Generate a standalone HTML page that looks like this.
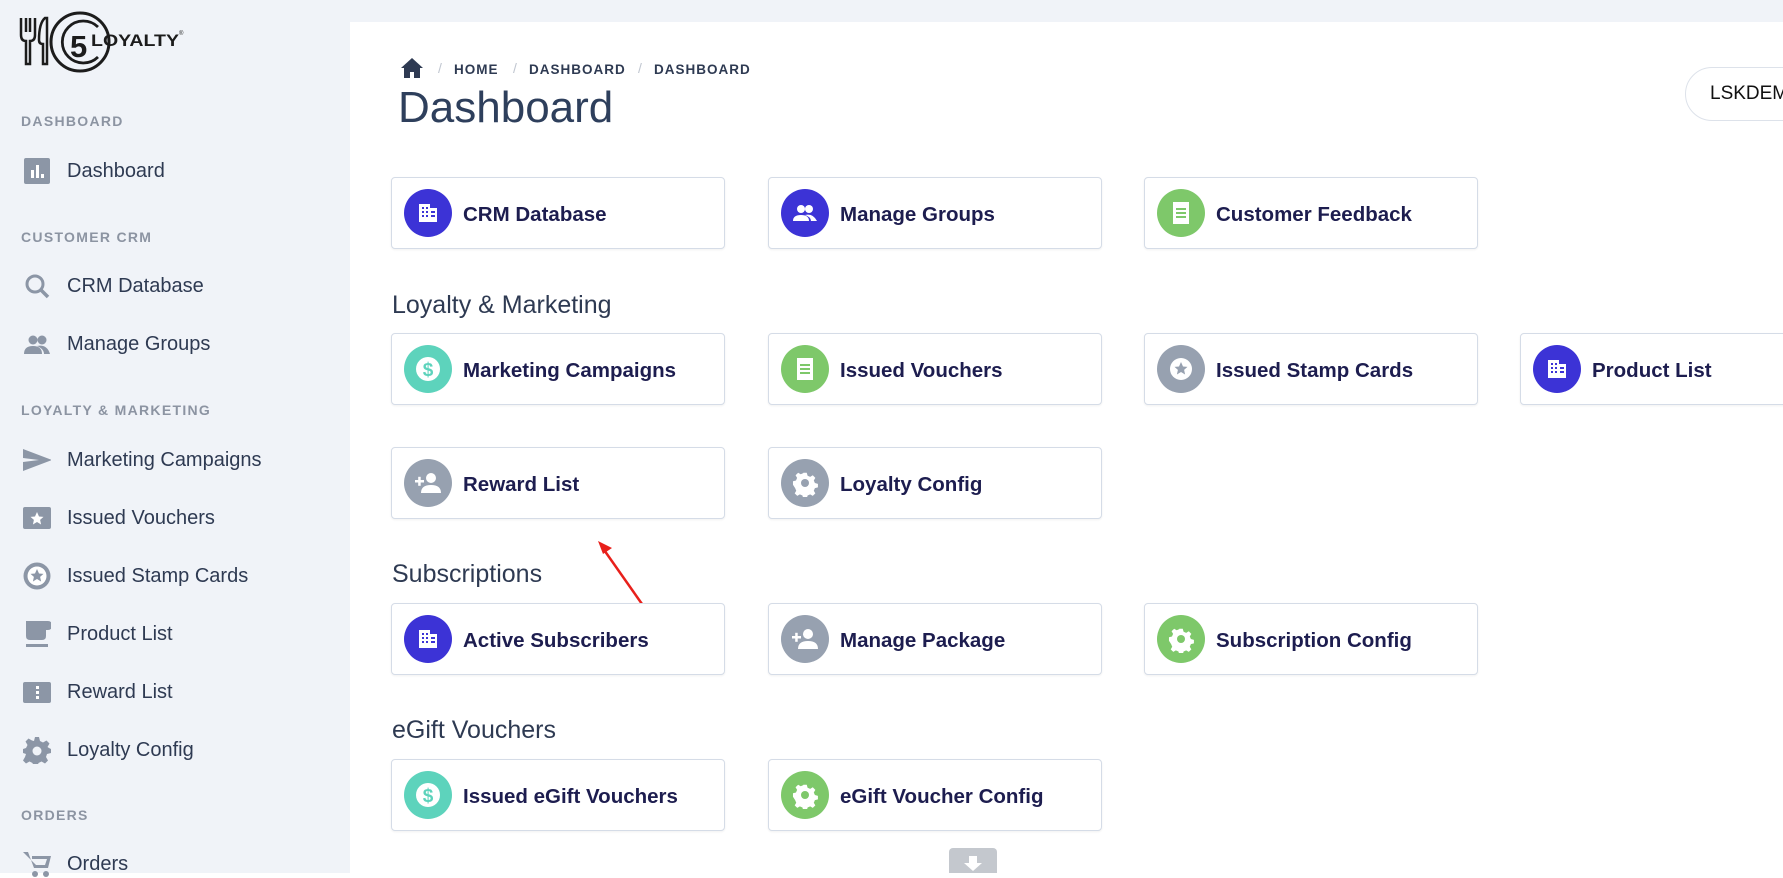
<!DOCTYPE html>
<html><head><meta charset="utf-8"><style>
*{margin:0;padding:0;box-sizing:border-box}
html{background:#fff}
body{width:1783px;height:873px;overflow:hidden;background:#f0f3f8;font-family:"Liberation Sans",Arial,sans-serif;position:relative}
.main{position:absolute;left:350px;top:22px;width:1433px;height:851px;background:#fff}
.sh{position:absolute;left:21px;font-size:14px;font-weight:bold;letter-spacing:1.3px;color:#8c94a2}
.si{position:absolute;left:23px;height:28px;display:flex;align-items:center;font-size:20px;color:#2e3a52}
.si svg{width:28px;height:28px;margin-right:16px}
.card{position:absolute;width:334px;height:72px;border:1px solid #d5dce7;border-radius:4px;background:#fff;box-shadow:0 1px 2px rgba(0,0,0,.06);display:flex;align-items:center;padding-left:12px;padding-top:3px;font-size:20.5px;font-weight:bold;color:#1d1d4f}
.ic{width:48px;height:48px;border-radius:50%;margin-right:11px;margin-top:-3px;display:flex;align-items:center;justify-content:center}
.ic svg{width:28px;height:28px}
.blue{background:#3c33d6}.green{background:#7ec86a}.teal{background:#5dd3bc}.gray{background:#97a1b0}
.sec{position:absolute;left:392px;font-size:25px;color:#2e3a52}
.bc{position:absolute;top:62px;font-size:13.5px;font-weight:bold;letter-spacing:1px;color:#2e3a52}
.sl{position:absolute;top:60px;color:#c0c6d0;font-size:14px}
</style></head><body>
<!-- logo -->
<svg style="position:absolute;left:18px;top:10px" width="170" height="66" viewBox="0 0 170 66">
<g fill="none" stroke="#1c1c1c" stroke-width="2.5">
<path d="M3 8v17q0 6 5 6v23h4V31q5 0 5-6V8M8 8v14M12 8v14"/>
<path d="M27 8q-6 5-6 22q0 4 4 4v20h4V8z"/>
<circle cx="62" cy="32" r="29" stroke-width="3"/>
<path d="M80 17a21 21 0 1 0 0 30" stroke-width="2.8"/>
</g>
<text x="52" y="47" font-family="Liberation Sans" font-weight="bold" font-size="31" fill="#1c1c1c">5</text>
<text x="73" y="36" font-family="Liberation Sans" font-weight="bold" font-size="17" fill="#1c1c1c" textLength="88" lengthAdjust="spacingAndGlyphs">LOYALTY</text>
<text x="161" y="25" font-size="6" fill="#1c1c1c">®</text>
</svg>
<div class="sh" style="top:113px">DASHBOARD</div>
<div class="si" style="top:157px"><svg viewBox="0 0 28 28"><rect x="1" y="1" width="26" height="26" rx="2" fill="#8c96a6"/><rect x="8" y="13" width="3" height="8" fill="#fff"/><rect x="13" y="8" width="3" height="13" fill="#fff"/><rect x="18" y="17" width="3" height="4" fill="#fff"/></svg>Dashboard</div>
<div class="sh" style="top:229px">CUSTOMER CRM</div>
<div class="si" style="top:272px"><svg viewBox="0 0 28 28"><circle cx="12" cy="12" r="8" fill="none" stroke="#8c96a6" stroke-width="3"/><path d="M18 18l7 7" stroke="#8c96a6" stroke-width="3.5"/></svg>CRM Database</div>
<div class="si" style="top:330px"><svg viewBox="0 0 28 28" fill="#8c96a6"><circle cx="10" cy="10" r="4.5"/><circle cx="19" cy="10" r="4.5"/><path d="M1 24q0-8 9-8t9 8zM14 16q10-2 13 8h-6q0-5-7-8z"/></svg>Manage Groups</div>
<div class="sh" style="top:402px">LOYALTY &amp; MARKETING</div>
<div class="si" style="top:446px"><svg viewBox="0 0 28 28"><path d="M0 3l29 11L0 25V16l16-2L0 12z" fill="#8c96a6"/></svg>Marketing Campaigns</div>
<div class="si" style="top:504px"><svg viewBox="0 0 28 28"><rect x="0" y="3" width="28" height="22" rx="2" fill="#8c96a6"/><path d="M14 8l2 4.5 4.5.4-3.4 3 1 4.6L14 18l-4.1 2.5 1-4.6-3.4-3 4.5-.4z" fill="#fff"/></svg>Issued Vouchers</div>
<div class="si" style="top:562px"><svg viewBox="0 0 28 28"><circle cx="14" cy="14" r="13.5" fill="#8c96a6"/><circle cx="14" cy="14" r="9.5" fill="#fff"/><path d="M14 7l2 4.5 4.5.4-3.4 3 1 4.6L14 17l-4.1 2.5 1-4.6-3.4-3 4.5-.4z" fill="#8c96a6"/></svg>Issued Stamp Cards</div>
<div class="si" style="top:620px"><svg viewBox="0 0 28 28" fill="#8c96a6"><path d="M3 1h22a4 4 0 0 1 0 9h-2v6q0 4-4 4H7q-4 0-4-4z"/><rect x="3" y="24" width="22" height="3"/></svg>Product List</div>
<div class="si" style="top:678px"><svg viewBox="0 0 28 28"><rect x="0" y="4" width="28" height="21" rx="2" fill="#8c96a6"/><rect x="13" y="8" width="3" height="3" fill="#fff"/><rect x="13" y="13" width="3" height="3" fill="#fff"/><rect x="13" y="18" width="3" height="3" fill="#fff"/></svg>Reward List</div>
<div class="si" style="top:736px"><svg viewBox="0 0 28 28"><path d="M12 1h4l1 4 3 1.5 3.5-2 3 3-2 3.5L26 12l2 1v4l-4 1-1 3 2 3.5-3 3-3.5-2-3 1.5-1 3h-4l-1-3-3-1.5-3.5 2-3-3 2-3.5L3 18l-3-1v-4l3-1 1.5-3-2-3.5 3-3 3.5 2L11 5z" fill="#8c96a6"/><circle cx="14" cy="15" r="4.5" fill="#f0f3f8"/></svg>Loyalty Config</div>
<div class="sh" style="top:807px">ORDERS</div>
<div class="si" style="top:850px"><svg viewBox="0 0 28 28" fill="#8c96a6"><path d="M0 2h5l6 16h14l3-12H9v3h15l-2 6H13z"/><circle cx="12" cy="24" r="3"/><circle cx="23" cy="24" r="3"/></svg>Orders</div>

<div class="main"></div>
<svg style="position:absolute;left:401px;top:58px" width="22" height="20" viewBox="0 0 22 20"><path d="M11 0L0 10h3v10h6v-6h4v6h6V10h3z" fill="#2e3a52"/></svg>
<span class="sl" style="left:438px">/</span><span class="bc" style="left:454px">HOME</span>
<span class="sl" style="left:513px">/</span><span class="bc" style="left:529px">DASHBOARD</span>
<span class="sl" style="left:638px">/</span><span class="bc" style="left:654px">DASHBOARD</span>
<div style="position:absolute;left:398px;top:83px;font-size:44px;color:#2e3f5c">Dashboard</div>
<div style="position:absolute;left:1685px;top:67px;width:140px;height:54px;border:1px solid #dde2ea;border-radius:27px;padding:15px 0 0 24px;font-size:19px;color:#111;font-weight:500">LSKDEMO</div>

<div class="card" style="left:391px;top:177px"><div class="ic blue"><svg viewBox="0 0 28 28" fill="#fff"><path d="M5 5h11v4h7v14H5z"/><g fill="#3c33d6"><rect x="8" y="8" width="2" height="2"/><rect x="12" y="8" width="2" height="2"/><rect x="8" y="12" width="2" height="2"/><rect x="12" y="12" width="2" height="2"/><rect x="8" y="16" width="2" height="2"/><rect x="12" y="16" width="2" height="2"/><rect x="17" y="12" width="4" height="2"/><rect x="17" y="16" width="4" height="2"/></g></svg></div>CRM Database</div>
<div class="card" style="left:768px;top:177px"><div class="ic blue"><svg viewBox="0 0 28 28" fill="#fff"><circle cx="10" cy="10" r="4"/><circle cx="18" cy="10" r="4"/><path d="M2 22q0-6 8-6t8 6zM14 16q8-2 12 6h-6q0-4-6-6z"/></svg></div>Manage Groups</div>
<div class="card" style="left:1144px;top:177px"><div class="ic green"><svg viewBox="0 0 28 28"><rect x="6" y="3" width="16" height="22" fill="#fff"/><g fill="#7ec86a"><rect x="9" y="9" width="10" height="2"/><rect x="9" y="13" width="10" height="2"/><rect x="9" y="17" width="10" height="2"/></g></svg></div>Customer Feedback</div>

<div class="sec" style="top:291px">Loyalty &amp; Marketing</div>
<div class="card" style="left:391px;top:333px"><div class="ic teal"><svg viewBox="0 0 28 28"><circle cx="14" cy="14" r="12" fill="#fff"/><text x="14" y="21" text-anchor="middle" font-size="19" font-family="Liberation Sans" fill="#5dd3bc">$</text></svg></div>Marketing Campaigns</div>
<div class="card" style="left:768px;top:333px"><div class="ic green"><svg viewBox="0 0 28 28"><rect x="6" y="3" width="16" height="22" fill="#fff"/><g fill="#7ec86a"><rect x="9" y="9" width="10" height="2"/><rect x="9" y="13" width="10" height="2"/><rect x="9" y="17" width="10" height="2"/></g></svg></div>Issued Vouchers</div>
<div class="card" style="left:1144px;top:333px"><div class="ic gray"><svg viewBox="0 0 28 28"><circle cx="14" cy="14" r="11" fill="#fff"/><path d="M14 7l2 4.5 4.5.4-3.4 3 1 4.6L14 17l-4.1 2.5 1-4.6-3.4-3 4.5-.4z" fill="#97a1b0"/></svg></div>Issued Stamp Cards</div>
<div class="card" style="left:1520px;top:333px"><div class="ic blue"><svg viewBox="0 0 28 28" fill="#fff"><path d="M5 5h11v4h7v14H5z"/><g fill="#3c33d6"><rect x="8" y="8" width="2" height="2"/><rect x="12" y="8" width="2" height="2"/><rect x="8" y="12" width="2" height="2"/><rect x="12" y="12" width="2" height="2"/><rect x="8" y="16" width="2" height="2"/><rect x="12" y="16" width="2" height="2"/><rect x="17" y="12" width="4" height="2"/><rect x="17" y="16" width="4" height="2"/></g></svg></div>Product List</div>
<div class="card" style="left:391px;top:447px"><div class="ic gray"><svg viewBox="0 0 28 28" fill="#fff"><circle cx="17" cy="9" r="5"/><path d="M7 24q0-8 10-8t10 8z"/><rect x="1" y="11" width="9" height="2.5"/><rect x="4.2" y="7.8" width="2.5" height="9"/></svg></div>Reward List</div>
<div class="card" style="left:768px;top:447px"><div class="ic gray"><svg viewBox="0 0 28 28"><path d="M12 2h4l1 3.5 3 1.3 3-1.8 3 3-1.8 3 1.3 3 3.5 1v4l-3.5 1-1.3 3 1.8 3-3 3-3-1.8-3 1.3-1 3.5h-4l-1-3.5-3-1.3-3 1.8-3-3 1.8-3-1.3-3L0 16v-4l3.5-1 1.3-3-1.8-3 3-3 3 1.8 3-1.3z" fill="#fff" transform="scale(.86) translate(2.3 2.3)"/><circle cx="14" cy="14" r="4" fill="#97a1b0"/></svg></div>Loyalty Config</div>

<svg style="position:absolute;left:590px;top:535px" width="60" height="75"><path d="M52 69L12 12" stroke="#e8201b" stroke-width="2.5"/><path d="M8 6l14 7-9 6z" fill="#e8201b"/></svg>

<div class="sec" style="top:560px">Subscriptions</div>
<div class="card" style="left:391px;top:603px"><div class="ic blue"><svg viewBox="0 0 28 28" fill="#fff"><path d="M5 5h11v4h7v14H5z"/><g fill="#3c33d6"><rect x="8" y="8" width="2" height="2"/><rect x="12" y="8" width="2" height="2"/><rect x="8" y="12" width="2" height="2"/><rect x="12" y="12" width="2" height="2"/><rect x="8" y="16" width="2" height="2"/><rect x="12" y="16" width="2" height="2"/><rect x="17" y="12" width="4" height="2"/><rect x="17" y="16" width="4" height="2"/></g></svg></div>Active Subscribers</div>
<div class="card" style="left:768px;top:603px"><div class="ic gray"><svg viewBox="0 0 28 28" fill="#fff"><circle cx="17" cy="9" r="5"/><path d="M7 24q0-8 10-8t10 8z"/><rect x="1" y="11" width="9" height="2.5"/><rect x="4.2" y="7.8" width="2.5" height="9"/></svg></div>Manage Package</div>
<div class="card" style="left:1144px;top:603px"><div class="ic green"><svg viewBox="0 0 28 28"><path d="M12 2h4l1 3.5 3 1.3 3-1.8 3 3-1.8 3 1.3 3 3.5 1v4l-3.5 1-1.3 3 1.8 3-3 3-3-1.8-3 1.3-1 3.5h-4l-1-3.5-3-1.3-3 1.8-3-3 1.8-3-1.3-3L0 16v-4l3.5-1 1.3-3-1.8-3 3-3 3 1.8 3-1.3z" fill="#fff" transform="scale(.86) translate(2.3 2.3)"/><circle cx="14" cy="14" r="4" fill="#7ec86a"/></svg></div>Subscription Config</div>

<div class="sec" style="top:716px">eGift Vouchers</div>
<div class="card" style="left:391px;top:759px"><div class="ic teal"><svg viewBox="0 0 28 28"><circle cx="14" cy="14" r="12" fill="#fff"/><text x="14" y="21" text-anchor="middle" font-size="19" font-family="Liberation Sans" fill="#5dd3bc">$</text></svg></div>Issued eGift Vouchers</div>
<div class="card" style="left:768px;top:759px"><div class="ic green"><svg viewBox="0 0 28 28"><path d="M12 2h4l1 3.5 3 1.3 3-1.8 3 3-1.8 3 1.3 3 3.5 1v4l-3.5 1-1.3 3 1.8 3-3 3-3-1.8-3 1.3-1 3.5h-4l-1-3.5-3-1.3-3 1.8-3-3 1.8-3-1.3-3L0 16v-4l3.5-1 1.3-3-1.8-3 3-3 3 1.8 3-1.3z" fill="#fff" transform="scale(.86) translate(2.3 2.3)"/><circle cx="14" cy="14" r="4" fill="#7ec86a"/></svg></div>eGift Voucher Config</div>

<div style="position:absolute;left:949px;top:848px;width:48px;height:25px;background:#c4c8ce;border-radius:4px 4px 0 0"><svg width="48" height="25"><path d="M20 8h8v7h5l-9 8-9-8h5z" fill="#fff"/></svg></div>
</body></html>
